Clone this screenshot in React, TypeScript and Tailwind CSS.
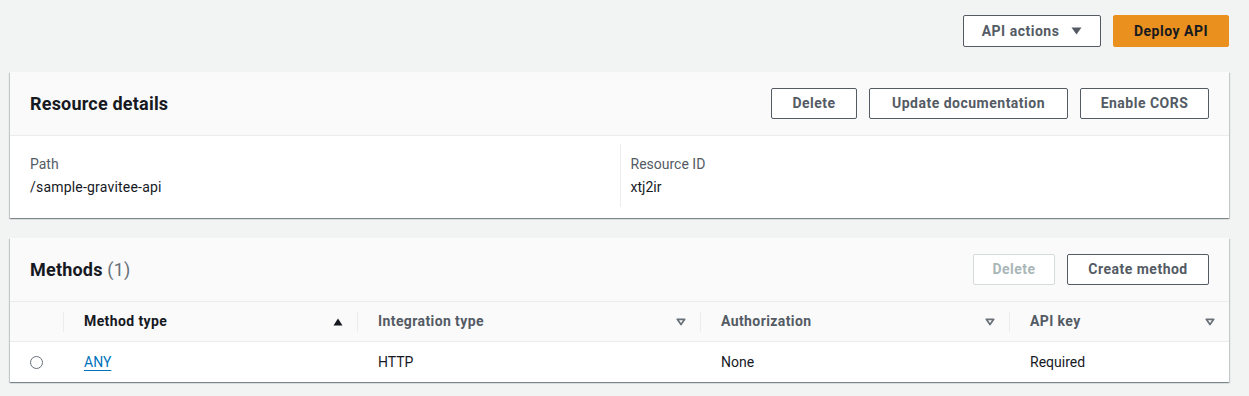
import React from "react";

const font = { fontFamily: '"Roboto", "Liberation Sans", sans-serif' };

function Btn({ children, disabled, w }: { children: React.ReactNode; disabled?: boolean; w: string }) {
  return (
    <button
      className={
        (disabled
          ? "h-[31px] border border-[#d5dbdb] rounded-[2px] bg-white text-[14px] font-bold tracking-[0.5px] text-[#aab7b8] "
          : "h-[31px] border border-[#545b64] rounded-[2px] bg-white text-[14px] font-bold tracking-[0.5px] text-[#545b64] ") + w
      }
    >
      {children}
    </button>
  );
}

function SortUp() {
  return (
    <svg width="10" height="8" viewBox="0 0 10 8">
      <path d="M5 0.5 L9.5 7.5 L0.5 7.5 Z" fill="#16191f" />
    </svg>
  );
}

function SortDown() {
  return (
    <svg width="10" height="8" viewBox="0 0 10 8">
      <path d="M1.3 1.3 L8.7 1.3 L5 6.5 Z" fill="none" stroke="#687078" strokeWidth="1.7" strokeLinejoin="round" />
    </svg>
  );
}

function HeadCell({ label, active, sep = true }: { label: string; active?: boolean; sep?: boolean }) {
  return (
    <div className="flex items-center h-full">
      {sep && <div className="w-px h-[20px] bg-[#eaeded]" />}
      <div className="flex-1 flex items-center justify-between pl-5 pr-[14px]">
        <span
          className={
            active
              ? "text-[14px] font-bold tracking-[0.4px] text-[#16191f]"
              : "text-[14px] font-bold tracking-[0.4px] text-[#545b64]"
          }
        >
          {label}
        </span>
        {active ? <SortUp /> : <SortDown />}
      </div>
    </div>
  );
}

const cardShadow =
  "shadow-[0_1px_1px_0_rgba(0,28,36,0.3),1px_1px_1px_0_rgba(0,28,36,0.15),-1px_1px_1px_0_rgba(0,28,36,0.15)]";

export default function App() {
  return (
    <div className="w-[1249px] h-[396px] bg-[#f2f3f3] pl-[10px] pr-[20px] pt-[15px]" style={font}>
      <div className="flex justify-end gap-3">
        <button className="h-[32px] w-[138px] border border-[#545b64] rounded-[2px] bg-white text-[14px] font-bold tracking-[0.5px] text-[#545b64] flex items-center justify-center gap-[12px]">
          API actions
          <svg width="11" height="8" viewBox="0 0 11 8">
            <path d="M0.5 0.5 L10.5 0.5 L5.5 7.5 Z" fill="#545b64" />
          </svg>
        </button>
        <button className="h-[32px] w-[116px] rounded-[2px] bg-[#e9901e] border border-[#e9901e] text-[14px] font-bold tracking-[0.5px] text-[#16191f]">
          Deploy API
        </button>
      </div>

      <div className={"mt-[25px] bg-white " + cardShadow}>
        <div className="h-[64px] bg-[#fafafa] border-b border-[#eaeded] flex items-center justify-between px-5">
          <h2 className="text-[18px] font-bold tracking-[0.2px] text-[#16191f]">Resource details</h2>
          <div className="flex gap-3">
            <Btn w="w-[86px]">Delete</Btn>
            <Btn w="w-[199px]">Update documentation</Btn>
            <Btn w="w-[129px]">Enable CORS</Btn>
          </div>
        </div>
        <div className="px-5 pt-2 pb-[11px] grid grid-cols-2">
          <div className="py-[10px]">
            <div className="text-[14px] leading-[20px] text-[#545b64]">Path</div>
            <div className="mt-[3px] text-[14px] leading-[20px] text-[#16191f] tracking-[0.2px]">/sample-gravitee-api</div>
          </div>
          <div className="py-[10px] border-l border-[#eaeded] pl-[10px]">
            <div className="text-[14px] leading-[20px] text-[#545b64]">Resource ID</div>
            <div className="mt-[3px] text-[14px] leading-[20px] text-[#16191f]">xtj2ir</div>
          </div>
        </div>
      </div>

      <div className={"mt-[20px] bg-white " + cardShadow}>
        <div className="h-[64px] bg-[#fafafa] border-b border-[#eaeded] flex items-center justify-between px-5">
          <h2 className="text-[18px] font-bold tracking-[0.2px] text-[#16191f]">
            Methods <span className="font-normal text-[#687078]">(1)</span>
          </h2>
          <div className="flex gap-3">
            <Btn disabled w="w-[82px]">Delete</Btn>
            <Btn w="w-[142px]">Create method</Btn>
          </div>
        </div>
        <div className="grid grid-cols-[53px_294px_343px_309px_1fr] h-[40px] bg-[#fafafa] border-b border-[#eaeded]">
          <div />
          <HeadCell label="Method type" active />
          <HeadCell label="Integration type" />
          <HeadCell label="Authorization" />
          <HeadCell label="API key" />
        </div>
        <div className="grid grid-cols-[53px_294px_343px_309px_1fr] h-[40px] items-center text-[14px] text-[#16191f]">
          <div className="flex justify-center">
            <div className="w-[13px] h-[13px] rounded-full border border-[#687078] bg-white" />
          </div>
          <div className="pl-[21px]">
            <a className="text-[#0073bb] underline underline-offset-[3px]">ANY</a>
          </div>
          <div className="pl-[21px]">HTTP</div>
          <div className="pl-[21px]">None</div>
          <div className="pl-[21px]">Required</div>
        </div>
      </div>
    </div>
  );
}
